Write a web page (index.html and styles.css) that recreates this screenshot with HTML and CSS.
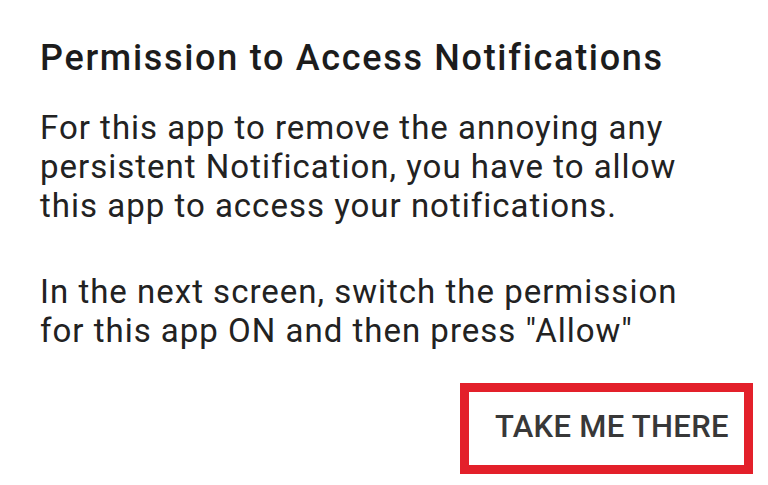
FILE: index.html
```html
<!DOCTYPE html>
<html>
<head>
<meta charset="utf-8">
<link rel="stylesheet" href="styles.css">
</head>
<body>
<div class="dialog">
  <h1 class="title">Permission to Access Notifications</h1>
  <p class="text">For this app to remove the annoying any<br>persistent Notification, you have to allow<br>this app to access your notifications.</p>
  <p class="text second">In the next screen, switch the permission<br>for this app ON and then press "Allow"</p>
  <div class="actions">
    <div class="highlight">
      <span class="btn">TAKE ME THERE</span>
    </div>
  </div>
</div>
</body>
</html>
```

FILE: styles.css
```css
html, body {
  margin: 0;
  padding: 0;
  background: #ffffff;
}
.dialog {
  width: 768px;
  height: 485px;
  box-sizing: border-box;
  padding: 36px 15px 0 40px;
  font-family: Roboto, "Noto Sans", sans-serif;
  color: #212121;
  overflow: hidden;
}
.title {
  margin: 0;
  font-size: 36px;
  font-weight: 500;
  line-height: 44px;
  letter-spacing: 1.7px;
  color: #1c1c1c;
  white-space: nowrap;
}
.text {
  margin: 28px 0 0 0;
  font-size: 33px;
  line-height: 39px;
  font-weight: 400;
  letter-spacing: 1px;
  color: #222222;
  white-space: nowrap;
}
.text.second {
  margin-top: 47px;
}
.actions {
  display: flex;
  justify-content: flex-end;
  margin-top: 33px;
}
.highlight {
  width: 293px;
  height: 91px;
  box-sizing: border-box;
  border: 9px solid #e3202a;
  padding: 0 0 4px 26px;
  display: flex;
  align-items: center;
}
.btn {
  font-size: 31px;
  line-height: 69px;
  font-weight: 500;
  color: #383838;
  letter-spacing: 0.3px;
  white-space: nowrap;
}
```
